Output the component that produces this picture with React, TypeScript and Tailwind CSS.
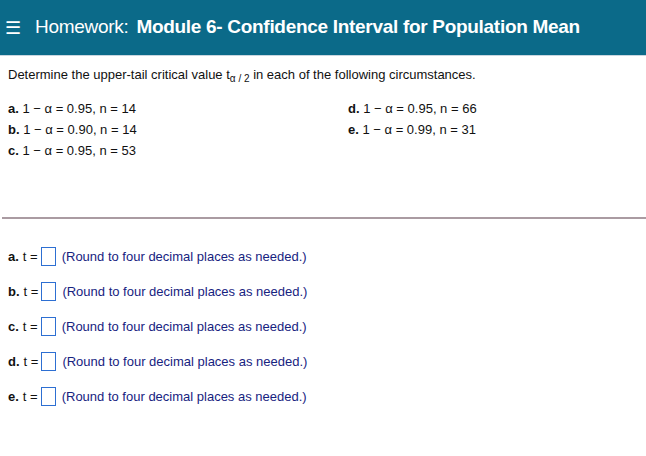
import { Fragment } from "react";

const items = [
  { k: "a.", a: "0.95", n: "14" },
  { k: "b.", a: "0.90", n: "14" },
  { k: "c.", a: "0.95", n: "53" },
];
const itemsRight = [
  { k: "d.", a: "0.95", n: "66" },
  { k: "e.", a: "0.99", n: "31" },
];

function Item({ k, a, n }: { k: string; a: string; n: string }) {
  return (
    <div className="h-[21px] leading-[21px]">
      <span className="font-bold">{k}</span> 1 − α = {a}, n = {n}
    </div>
  );
}

export default function App() {
  const rows = ["a.", "b.", "c.", "d.", "e."];
  return (
    <div className="w-[646px] h-[456px] bg-white text-[#111] font-['Liberation_Sans',Arial,sans-serif] overflow-hidden">
      {/* Header */}
      <div className="h-[56px] bg-[#0b6a89] border-b border-[#c8d6e0] flex items-center pl-[5px] text-white">
        <span className="text-[18px] leading-none w-[30px]">☰</span>
        <span className="text-[19px] tracking-[-0.3px]">Homework:</span>
        <span className="text-[19px] font-bold ml-[8px] tracking-[-0.3px]">
          Module 6- Confidence Interval for Population Mean
        </span>
      </div>

      {/* Question */}
      <div className="px-[8px] pt-[10px] text-[13px]">
        <p className="leading-[18px]">
          Determine the upper-tail critical value t
          <sub className="text-[10px]">α / 2</sub> in each of the following circumstances.
        </p>
        <div className="mt-[14px] flex">
          <div className="w-[340px]">
            {items.map((it) => (
              <Item key={it.k} {...it} />
            ))}
          </div>
          <div>
            {itemsRight.map((it) => (
              <Item key={it.k} {...it} />
            ))}
          </div>
        </div>
      </div>

      <div className="mt-[56px] ml-[2px] h-[2px] bg-[#aa9ba2]" />

      {/* Answers */}
      <div className="pl-[8px] pt-[28px] text-[13px] flex flex-col gap-[16px]">
        {rows.map((r) => (
          <Fragment key={r}>
            <div className="flex items-center h-[19px]">
              <span className="font-bold">{r}</span>
              <span className="ml-[4px]">t =</span>
              <span className="ml-[3px] w-[15px] h-[19px] border border-[#2d6fd2] inline-block" />
              <span className="ml-[6px] text-[#17237f]">(Round to four decimal places as needed.)</span>
            </div>
          </Fragment>
        ))}
      </div>
    </div>
  );
}
